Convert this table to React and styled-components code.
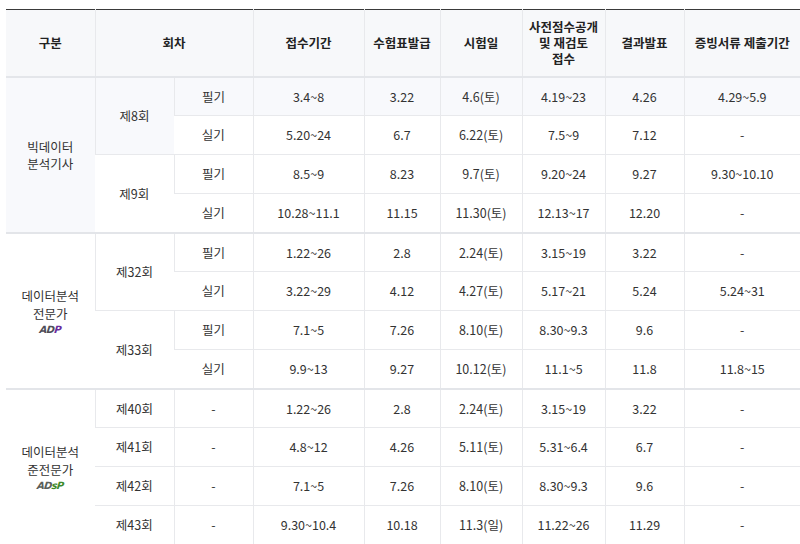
import styled, { createGlobalStyle } from "styled-components";

const GlobalStyle = createGlobalStyle`
  html, body {
    margin: 0;
    padding: 0;
    background: #fff;
    overflow: hidden;
  }
  body {
    font-family: "Noto Sans CJK KR", "Noto Sans", sans-serif;
    color: #333;
  }
`;

const widths = [89, 79, 79, 111, 76, 82, 83, 79, 116];

const groups = [
  {
    name: ["빅데이터", "분석기사"],
    rounds: [
      {
        title: "제8회",
        rows: [
          ["필기", "3.4~8", "3.22", "4.6(토)", "4.19~23", "4.26", "4.29~5.9"],
          ["실기", "5.20~24", "6.7", "6.22(토)", "7.5~9", "7.12", "-"],
        ],
      },
      {
        title: "제9회",
        rows: [
          ["필기", "8.5~9", "8.23", "9.7(토)", "9.20~24", "9.27", "9.30~10.10"],
          ["실기", "10.28~11.1", "11.15", "11.30(토)", "12.13~17", "12.20", "-"],
        ],
      },
    ],
  },
  {
    name: ["데이터분석", "전문가"],
    logo: "adp",
    rounds: [
      {
        title: "제32회",
        rows: [
          ["필기", "1.22~26", "2.8", "2.24(토)", "3.15~19", "3.22", "-"],
          ["실기", "3.22~29", "4.12", "4.27(토)", "5.17~21", "5.24", "5.24~31"],
        ],
      },
      {
        title: "제33회",
        rows: [
          ["필기", "7.1~5", "7.26", "8.10(토)", "8.30~9.3", "9.6", "-"],
          ["실기", "9.9~13", "9.27", "10.12(토)", "11.1~5", "11.8", "11.8~15"],
        ],
      },
    ],
  },
  {
    name: ["데이터분석", "준전문가"],
    logo: "adsp",
    rounds: [
      { title: "제40회", rows: [["-", "1.22~26", "2.8", "2.24(토)", "3.15~19", "3.22", "-"]] },
      { title: "제41회", rows: [["-", "4.8~12", "4.26", "5.11(토)", "5.31~6.4", "6.7", "-"]] },
      { title: "제42회", rows: [["-", "7.1~5", "7.26", "8.10(토)", "8.30~9.3", "9.6", "-"]] },
      { title: "제43회", rows: [["-", "9.30~10.4", "10.18", "11.3(일)", "11.22~26", "11.29", "-"]] },
    ],
  },
];

const Wrap = styled.div`
  padding: 9px 0 0 6px;
`;

const Table = styled.table`
  width: 794px;
  table-layout: fixed;
  border-collapse: collapse;
  border-top: 1px solid #3a3a3a;
  font-size: 12.5px;
  line-height: 17.5px;
`;

const HeadCell = styled.th`
  height: 66px;
  padding: 0 4px;
  background: #f7f8fa;
  color: #222;
  font-weight: 700;
  font-size: 12.5px;
  line-height: 16px;
  text-align: center;
  border-left: 1px solid #e8e9ec;
  border-bottom: 2px solid #e4e6ea;
  &:first-child {
    border-left: none;
  }
`;

const Cell = styled.td`
  height: ${(p) => (p.$groupStart ? "37px" : "38px")};
  padding: 0 4px;
  text-align: center;
  vertical-align: middle;
  color: #333;
  background: ${(p) => (p.$tint ? "#f8f9fc" : "#fff")};
  border-left: 1px solid #e8e9ec;
  border-top: ${(p) => (p.$groupStart ? "2px solid #e3e5e9" : "1px solid #e8e9ec")};
  &:first-child {
    border-left: none;
  }
`;

const NameCell = styled(Cell)`
  border-left: none;
`;

const Logo = styled.div`
  margin-top: 3px;
  font-family: "DejaVu Sans", sans-serif;
  font-size: 10px;
  font-weight: 900;
  font-style: italic;
  letter-spacing: -0.7px;
  line-height: 10px;
  transform: skewX(-6deg);
`;

const Mark = styled.span`
  color: ${(p) => p.$color};
`;

function BrandLogo({ kind }) {
  if (kind === "adp") {
    return (
      <Logo>
        <Mark $color="#4e4e58">AD</Mark>
        <Mark $color="#6a2c9c">P</Mark>
      </Logo>
    );
  }
  return (
    <Logo>
      <Mark $color="#5a5e5a">AD</Mark>
      <Mark $color="#3e8a2c">sP</Mark>
    </Logo>
  );
}

export default function App() {
  const body = [];
  groups.forEach((g, gi) => {
    const groupRows = g.rounds.reduce((n, r) => n + r.rows.length, 0);
    let first = true;
    g.rounds.forEach((round, ri) => {
      round.rows.forEach((row, rowi) => {
        const tint = gi === 0 && ri === 0 && rowi === 0;
        const groupStart = first;
        body.push(
          <tr key={`${gi}-${ri}-${rowi}`}>
            {first && (
              <NameCell rowSpan={groupRows} $tint={gi === 0} $groupStart>
                {g.name[0]}
                <br />
                {g.name[1]}
                {g.logo && <BrandLogo kind={g.logo} />}
              </NameCell>
            )}
            {rowi === 0 && (
              <Cell rowSpan={round.rows.length} $tint={tint} $groupStart={groupStart}>
                {round.title}
              </Cell>
            )}
            {row.map((v, ci) => (
              <Cell key={ci} $tint={tint} $groupStart={groupStart}>
                {v}
              </Cell>
            ))}
          </tr>
        );
        first = false;
      });
    });
  });

  return (
    <>
      <GlobalStyle />
      <Wrap>
        <Table>
          <colgroup>
            {widths.map((w, i) => (
              <col key={i} style={{ width: w }} />
            ))}
          </colgroup>
          <thead>
            <tr>
              <HeadCell>구분</HeadCell>
              <HeadCell colSpan={2}>회차</HeadCell>
              <HeadCell>접수기간</HeadCell>
              <HeadCell>수험표발급</HeadCell>
              <HeadCell>시험일</HeadCell>
              <HeadCell>
                사전점수공개
                <br />및 재검토
                <br />
                접수
              </HeadCell>
              <HeadCell>결과발표</HeadCell>
              <HeadCell>증빙서류 제출기간</HeadCell>
            </tr>
          </thead>
          <tbody>{body}</tbody>
        </Table>
      </Wrap>
    </>
  );
}
